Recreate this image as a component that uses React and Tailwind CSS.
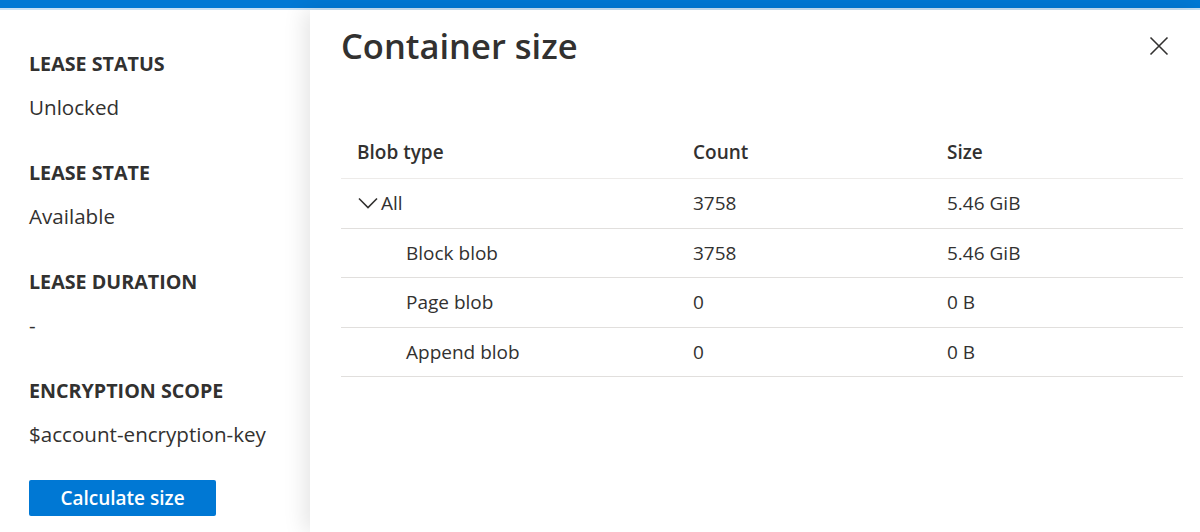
const fields = [
  { label: 'LEASE STATUS', value: 'Unlocked' },
  { label: 'LEASE STATE', value: 'Available' },
  { label: 'LEASE DURATION', value: '-' },
  { label: 'ENCRYPTION SCOPE', value: '$account-encryption-key' },
];

const rows = [
  { name: 'All', count: '3758', size: '5.46 GiB', parent: true },
  { name: 'Block blob', count: '3758', size: '5.46 GiB' },
  { name: 'Page blob', count: '0', size: '0 B' },
  { name: 'Append blob', count: '0', size: '0 B' },
];

function Chevron() {
  return (
    <svg width="20" height="12" viewBox="0 0 20 12" className="mr-[3px]">
      <path d="M1 1.5 L10 10.5 L19 1.5" fill="none" stroke="#323130" strokeWidth="1.6" />
    </svg>
  );
}

function CloseIcon() {
  return (
    <svg width="20" height="20" viewBox="0 0 20 20">
      <path d="M1.5 1.5 L18.5 18.5 M18.5 1.5 L1.5 18.5" fill="none" stroke="#323130" strokeWidth="1.6" />
    </svg>
  );
}

export default function App() {
  return (
    <div
      className="h-[532px] w-[1200px] flex flex-col bg-white text-[#323130] overflow-hidden"
      style={{ fontFamily: '"Open Sans", "Noto Sans", sans-serif' }}
    >
      {/* top bar */}
      <div className="h-[10px] bg-[#0078d4] border-b-[2px] border-[#c7e0f4] shrink-0" />

      <div className="flex flex-1 min-h-0">
        {/* left details */}
        <div className="w-[310px] shrink-0 pl-[29px] pt-[40px]">
          {fields.map((f, i) => (
            <div key={f.label} className={i > 0 ? 'mt-[38px]' : ''}>
              <div className="text-[19.7px] leading-[28px] font-bold">{f.label}</div>
              <div className="mt-[15px] text-[20.6px] leading-[28px]">{f.value}</div>
            </div>
          ))}
          <button className="mt-[32px] h-[36px] w-[187px] bg-[#0078d4] text-white text-[19px] font-semibold rounded-[2px]">
            Calculate size
          </button>
        </div>

        {/* blade */}
        <div className="flex-1 bg-white shadow-[-6px_0_20px_rgba(0,0,0,0.10)] pl-[31px] pr-[31px]">
          <div className="flex items-center justify-between h-[72px]">
            <h1 className="text-[34.5px] font-semibold leading-[44px]">Container size</h1>
            <CloseIcon />
          </div>

          <div className="mt-[45px] mr-[-14px]">
            <div className="grid grid-cols-[336px_254px_1fr] h-[52px] items-center border-b-[1.5px] border-[#edebe9] text-[19px] font-semibold">
              <div className="pl-[16px]">Blob type</div>
              <div className="pl-[16px]">Count</div>
              <div className="pl-[16px]">Size</div>
            </div>
            {rows.map((r) => (
              <div
                key={r.name}
                className="grid grid-cols-[336px_254px_1fr] h-[49.5px] items-center border-b-[1.5px] border-[#e1dfdd] text-[19px]"
              >
                <div className={r.parent ? 'pl-[17px] flex items-center' : 'pl-[65px]'}>
                  {r.parent && <Chevron />}
                  {r.name}
                </div>
                <div className="pl-[16px]">{r.count}</div>
                <div className="pl-[16px]">{r.size}</div>
              </div>
            ))}
          </div>
        </div>
      </div>
    </div>
  );
}
